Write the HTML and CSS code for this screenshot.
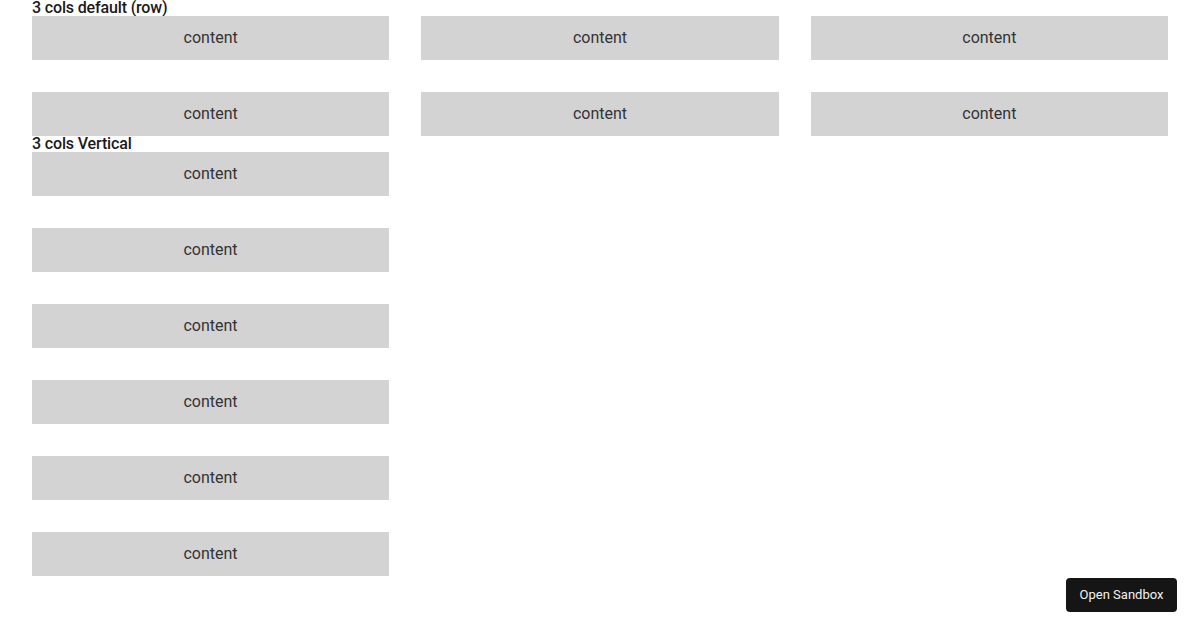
FILE: index.html
```html
<!DOCTYPE html>
<html>
<head>
<meta charset="utf-8">
<link rel="stylesheet" href="styles.css">
</head>
<body>
<div class="page">
  <h2 class="title">3 cols default (row)</h2>
  <div class="grid cols3">
    <div class="cell">content</div>
    <div class="cell">content</div>
    <div class="cell">content</div>
    <div class="cell">content</div>
    <div class="cell">content</div>
    <div class="cell">content</div>
  </div>
  <h2 class="title">3 cols Vertical</h2>
  <div class="grid vertical">
    <div class="cell">content</div>
    <div class="cell">content</div>
    <div class="cell">content</div>
    <div class="cell">content</div>
    <div class="cell">content</div>
    <div class="cell">content</div>
  </div>
</div>
<a class="sandbox">Open Sandbox</a>
</body>
</html>
```
FILE: styles.css
```css
html, body {
  margin: 0;
  padding: 0;
  background: #ffffff;
  font-family: Roboto, "Liberation Sans", sans-serif;
}
.page {
  padding: 0 32px;
}
.title {
  margin: 0;
  font-size: 16px;
  line-height: 16px;
  font-weight: 500;
  letter-spacing: -0.15px;
  color: #1a1a1a;
}
.grid {
  display: grid;
  gap: 32px;
}
.cols3 {
  grid-template-columns: repeat(3, 1fr);
}
.vertical {
  grid-template-columns: 357px;
}
.cell {
  height: 44px;
  box-sizing: border-box;
  padding-bottom: 2px;
  background: #d3d3d3;
  color: #333333;
  font-size: 16px;
  display: flex;
  align-items: center;
  justify-content: center;
}
.sandbox {
  position: fixed;
  right: 23px;
  bottom: 18px;
  width: 111px;
  height: 34px;
  box-sizing: border-box;
  padding-bottom: 2px;
  background: #151515;
  color: #f2f2f2;
  border-radius: 4px;
  font-size: 13px;
  display: flex;
  align-items: center;
  justify-content: center;
}
```
